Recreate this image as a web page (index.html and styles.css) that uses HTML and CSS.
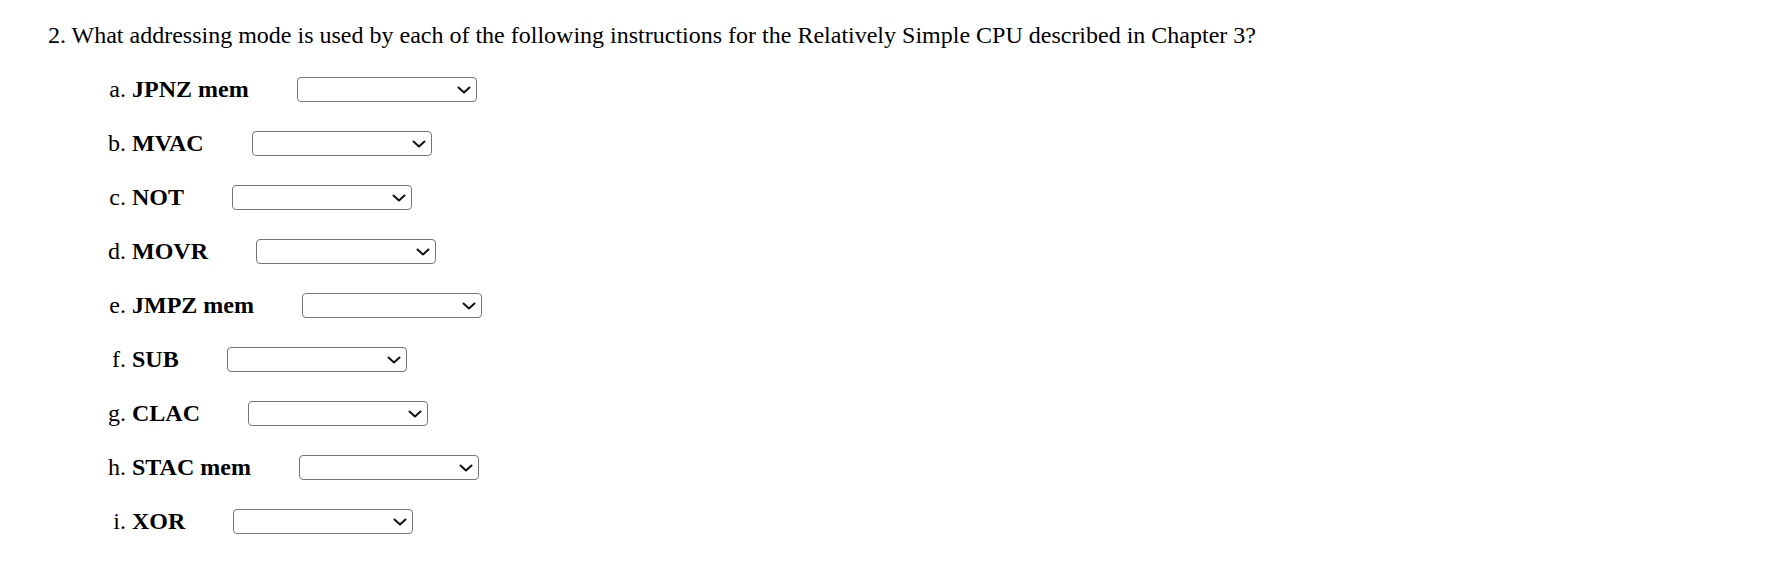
FILE: index.html
```html
<!DOCTYPE html>
<html lang="en">
<head>
<meta charset="utf-8">
<title>Question 2</title>
<link rel="stylesheet" href="styles.css">
</head>
<body>
<div class="page">
  <p class="prompt">2. What addressing mode is used by each of the following instructions for the Relatively Simple CPU described in Chapter 3?</p>
  <div class="items">
    <div class="item"><span class="mark">a.</span><b class="instr">JPNZ mem</b><span class="pick"><select class="answer"><option></option></select><svg class="chev" width="14" height="8" viewBox="0 0 14 8"><polyline points="1.5,1.5 7,6.5 12.5,1.5"/></svg></span></div>
    <div class="item"><span class="mark">b.</span><b class="instr">MVAC</b><span class="pick"><select class="answer"><option></option></select><svg class="chev" width="14" height="8" viewBox="0 0 14 8"><polyline points="1.5,1.5 7,6.5 12.5,1.5"/></svg></span></div>
    <div class="item"><span class="mark">c.</span><b class="instr">NOT</b><span class="pick"><select class="answer"><option></option></select><svg class="chev" width="14" height="8" viewBox="0 0 14 8"><polyline points="1.5,1.5 7,6.5 12.5,1.5"/></svg></span></div>
    <div class="item"><span class="mark">d.</span><b class="instr">MOVR</b><span class="pick"><select class="answer"><option></option></select><svg class="chev" width="14" height="8" viewBox="0 0 14 8"><polyline points="1.5,1.5 7,6.5 12.5,1.5"/></svg></span></div>
    <div class="item"><span class="mark">e.</span><b class="instr">JMPZ mem</b><span class="pick"><select class="answer"><option></option></select><svg class="chev" width="14" height="8" viewBox="0 0 14 8"><polyline points="1.5,1.5 7,6.5 12.5,1.5"/></svg></span></div>
    <div class="item"><span class="mark">f.</span><b class="instr">SUB</b><span class="pick"><select class="answer"><option></option></select><svg class="chev" width="14" height="8" viewBox="0 0 14 8"><polyline points="1.5,1.5 7,6.5 12.5,1.5"/></svg></span></div>
    <div class="item"><span class="mark">g.</span><b class="instr">CLAC</b><span class="pick"><select class="answer"><option></option></select><svg class="chev" width="14" height="8" viewBox="0 0 14 8"><polyline points="1.5,1.5 7,6.5 12.5,1.5"/></svg></span></div>
    <div class="item"><span class="mark">h.</span><b class="instr">STAC mem</b><span class="pick"><select class="answer"><option></option></select><svg class="chev" width="14" height="8" viewBox="0 0 14 8"><polyline points="1.5,1.5 7,6.5 12.5,1.5"/></svg></span></div>
    <div class="item"><span class="mark">i.</span><b class="instr">XOR</b><span class="pick"><select class="answer"><option></option></select><svg class="chev" width="14" height="8" viewBox="0 0 14 8"><polyline points="1.5,1.5 7,6.5 12.5,1.5"/></svg></span></div>
  </div>
</div>
</body>
</html>
```

FILE: styles.css
```css
html, body {
  margin: 0;
  background: #fff;
}

.page {
  padding: 22px 0 0 48px;
  font-family: "Liberation Serif", "Times New Roman", serif;
  font-size: 24px;
  color: #000;
}

.prompt {
  margin: 0 0 27px;
  line-height: 27px;
}

.items {
  display: flex;
  flex-direction: column;
  gap: 27px;
}

.item {
  display: flex;
  align-items: center;
  height: 27px;
  line-height: 27px;
}

/* list letters sit right-aligned before the instruction */
.mark {
  flex: 0 0 84px;
  box-sizing: border-box;
  padding-right: 6px;
  text-align: right;
  font-weight: normal;
}

.instr {
  font-weight: bold;
}

.pick {
  position: relative;
  display: inline-block;
  margin-left: 48px;
  height: 25px;
}

.answer {
  appearance: none;
  -webkit-appearance: none;
  display: block;
  box-sizing: border-box;
  width: 180px;
  height: 25px;
  margin: 0;
  border: 1px solid #767676;
  border-radius: 4px;
  background: #fff;
  font: 16px "Liberation Sans", Arial, sans-serif;
}

.chev {
  position: absolute;
  right: 6px;
  top: 9px;
  pointer-events: none;
}

.chev polyline {
  fill: none;
  stroke: #111;
  stroke-width: 2;
  stroke-linecap: round;
  stroke-linejoin: round;
}
```
